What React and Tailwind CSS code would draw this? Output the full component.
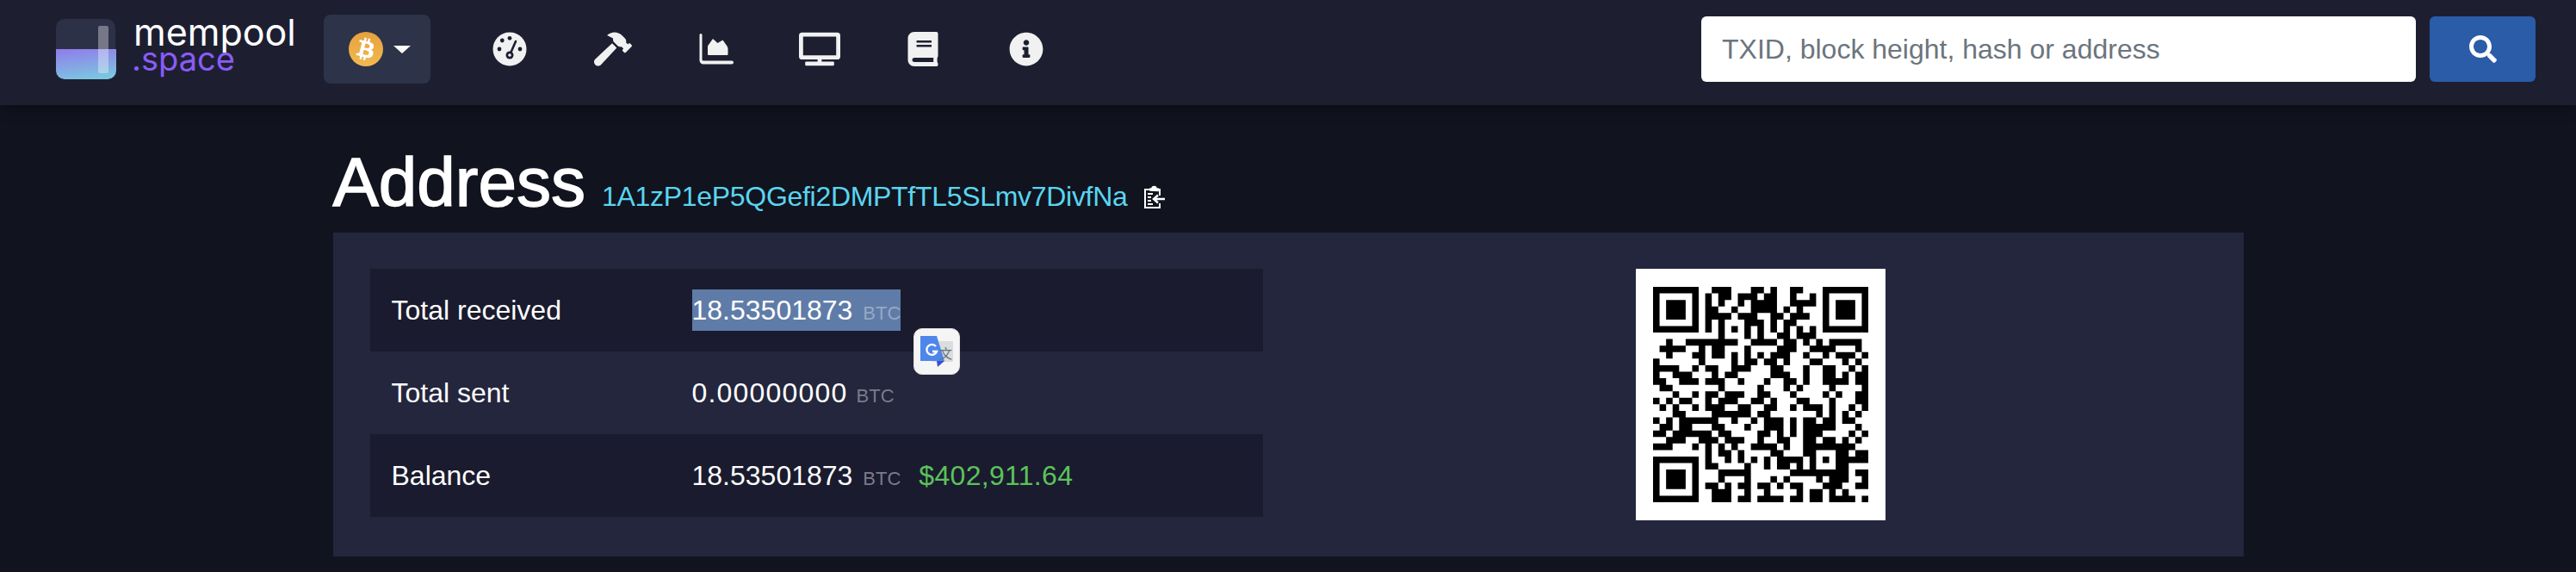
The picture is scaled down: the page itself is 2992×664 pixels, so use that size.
import React from 'react'
import { FaHammer, FaTv, FaBook, FaInfoCircle, FaSearch, FaBtc } from 'react-icons/fa'

const ADDRESS = '1A1zP1eP5QGefi2DMPTfTL5SLmv7DivfNa'

// qr version 4, level H, mask 1: 4 blocks of 9 data + 16 ec codewords
function buildQr(text) {
  const size = 33
  const exp = new Array(512)
  const log = new Array(256)
  let v = 1
  for (let i = 0; i < 255; i++) {
    exp[i] = v
    log[v] = i
    v <<= 1
    if (v & 256) v ^= 0x11d
  }
  for (let i = 255; i < 512; i++) exp[i] = exp[i - 255]
  const mul = (a, b) => (a && b ? exp[log[a] + log[b]] : 0)

  let gen = [1]
  for (let i = 0; i < 16; i++) {
    const next = new Array(gen.length + 1).fill(0)
    gen.forEach((c, j) => {
      next[j] ^= c
      next[j + 1] ^= mul(c, exp[i])
    })
    gen = next
  }

  let bits = '0100' + text.length.toString(2).padStart(8, '0')
  for (const ch of text) bits += ch.charCodeAt(0).toString(2).padStart(8, '0')
  bits += '0000'
  const data = []
  for (let i = 0; i < bits.length; i += 8) data.push(parseInt(bits.slice(i, i + 8), 2))

  const blocks = []
  const ecs = []
  for (let b = 0; b < 4; b++) {
    const block = data.slice(b * 9, b * 9 + 9)
    const rem = new Array(16).fill(0)
    block.forEach((d) => {
      const f = d ^ rem.shift()
      rem.push(0)
      for (let i = 0; i < 16; i++) rem[i] ^= mul(f, gen[i + 1])
    })
    blocks.push(block)
    ecs.push(rem)
  }
  const codewords = []
  for (let i = 0; i < 9; i++) blocks.forEach((b) => codewords.push(b[i]))
  for (let i = 0; i < 16; i++) ecs.forEach((e) => codewords.push(e[i]))

  const grid = Array.from({ length: size }, () => new Array(size).fill(false))
  const locked = Array.from({ length: size }, () => new Array(size).fill(false))
  const set = (x, y, on) => {
    if (x < 0 || y < 0 || x >= size || y >= size) return
    grid[y][x] = on
    locked[y][x] = true
  }

  for (let i = 0; i < size; i++) {
    set(6, i, i % 2 === 0)
    set(i, 6, i % 2 === 0)
  }
  const finder = (cx, cy) => {
    for (let dy = -4; dy <= 4; dy++) {
      for (let dx = -4; dx <= 4; dx++) {
        const d = Math.max(Math.abs(dx), Math.abs(dy))
        set(cx + dx, cy + dy, d !== 2 && d !== 4)
      }
    }
  }
  finder(3, 3)
  finder(size - 4, 3)
  finder(3, size - 4)
  for (let dy = -2; dy <= 2; dy++) {
    for (let dx = -2; dx <= 2; dx++) {
      set(26 + dx, 26 + dy, Math.max(Math.abs(dx), Math.abs(dy)) !== 1)
    }
  }

  const format = 0b001001110111110
  const fb = (i) => ((format >> i) & 1) === 1
  for (let i = 0; i < 6; i++) set(8, i, fb(i))
  set(8, 7, fb(6))
  set(8, 8, fb(7))
  set(7, 8, fb(8))
  for (let i = 9; i < 15; i++) set(14 - i, 8, fb(i))
  for (let i = 0; i < 8; i++) set(size - 1 - i, 8, fb(i))
  for (let i = 8; i < 15; i++) set(8, size - 15 + i, fb(i))
  set(8, size - 8, true)

  let n = 0
  for (let right = size - 1; right >= 1; right -= 2) {
    if (right === 6) right = 5
    for (let vert = 0; vert < size; vert++) {
      for (let j = 0; j < 2; j++) {
        const x = right - j
        const y = ((right + 1) & 2) === 0 ? size - 1 - vert : vert
        if (locked[y][x]) continue
        let on = false
        if (n < codewords.length * 8) {
          on = ((codewords[n >> 3] >> (7 - (n & 7))) & 1) === 1
          n++
        }
        grid[y][x] = y % 2 === 0 ? !on : on
      }
    }
  }
  return grid
}

function QrCode() {
  const grid = buildQr(ADDRESS)
  let d = ''
  grid.forEach((row, y) => row.forEach((on, x) => {
    if (on) d += `M${x} ${y}h1v1h-1z`
  }))
  return (
    <svg viewBox="0 0 33 33" className="w-[250px] h-[250px]">
      <path d={d} fill="#000" />
    </svg>
  )
}

function Logo() {
  return (
    <div className="flex items-center">
      <svg width="70" height="70" viewBox="0 0 70 70" className="block">
        <defs>
          <linearGradient id="pool" x1="0.3" y1="0" x2="0.55" y2="1">
            <stop offset="0" stopColor="#8f80ea" />
            <stop offset="1" stopColor="#7cc6e0" />
          </linearGradient>
        </defs>
        <path d="M10 0h49a10 10 0 0 1 10 10v25H0V10A10 10 0 0 1 10 0z" fill="#2d3148" />
        <path d="M0 35h70v25a10 10 0 0 1-10 10H10A10 10 0 0 1 0 60z" fill="url(#pool)" />
        <rect x="49" y="8" width="12" height="55" rx="2" fill="#fff" fillOpacity="0.35" />
      </svg>
      <div className="ml-[20px] w-[188px] -mt-[8px] whitespace-nowrap font-['Inter',sans-serif] leading-[31px]">
        <div className="text-white text-[43px]">mempool</div>
        <div className="text-[#8a5cf6] text-[38px] -ml-[2px]">.space</div>
      </div>
    </div>
  )
}

function GaugeIcon() {
  return (
    <svg width="40" height="40" viewBox="0 0 40 40">
      <circle cx="20" cy="20" r="19.500" fill="#f1f1f1" />
      <g fill="#1d1f31">
        <circle cx="8" cy="20" r="2.400" />
        <circle cx="11.300" cy="10" r="2.400" />
        <circle cx="20" cy="7.300" r="2.400" />
        <circle cx="32" cy="20" r="2.400" />
        <circle cx="20" cy="27" r="4.500" />
      </g>
      <path d="M20 27L27 11" stroke="#1d1f31" strokeWidth="2.600" strokeLinecap="round" />
      <circle cx="20" cy="27" r="1.800" fill="#f1f1f1" />
    </svg>
  )
}

function AreaIcon() {
  return (
    <svg width="40" height="36" viewBox="0 0 40 36" fill="#f1f1f1">
      <path d="M0.500 1.500a1.500 1.500 0 0 1 3 0V30a1.500 1.500 0 0 0 1.500 1.500h33a2 2 0 0 1 0 4H5A4.500 4.500 0 0 1 0.500 31z" />
      <path d="M10 24v-9q0-1 1-2l5-7 5.500 5 6-3.500 5 7q1 2 1 4v5.500q0 1-1 1H11q-1 0-1-1z" />
    </svg>
  )
}

function TranslateBadge() {
  return (
    <div className="absolute left-[257px] top-[45px] w-[54px] h-[54px] rounded-[10px] bg-[#f5f5f5] border border-[#dedede] flex items-center justify-center">
      <svg width="38" height="38" viewBox="0 0 38 38">
        <rect x="14" y="7" width="24" height="24" rx="1" fill="#dcdcdc" />
        <path d="M0 1h19l9 29H0z" fill="#4f86ec" />
        <path d="M19 30l9 0-8 7z" fill="#3b4fc9" />
        <path d="M18 13a6 6 0 1 0 1 6h-5" fill="none" stroke="#fff" strokeWidth="2.400" />
        <text x="22" y="27" fontSize="15" fill="#62757d" fontFamily="'Noto Sans CJK SC', sans-serif">文</text>
      </svg>
    </div>
  )
}

function Row({ label, dark, children }) {
  return (
    <div className={`grid grid-cols-[349px_1fr] items-center h-[96px] pl-[25px] ${dark ? 'bg-[#1a1b2e]' : ''}`}>
      <div>{label}</div>
      <div className="relative flex items-center">{children}</div>
    </div>
  )
}

function CopyIcon() {
  return (
    <svg width="25" height="28" viewBox="0 0 25 28" fill="none" stroke="#fff" strokeWidth="2" className="ml-[19px] self-center translate-y-[17px]">
      <path d="M8 5H2v21h17v-5M19 12V5h-6" />
      <path d="M8 6V4h2a2.500 2.500 0 0 1 5 0h2v2.500z" fill="#fff" strokeWidth="1.500" />
      <path d="M5 10h6M5 14h4M5 18h4M5 22h6" />
      <path d="M25 16H13M17 11.500L12 16l5 4.500" strokeWidth="2.500" />
    </svg>
  )
}

export default function App() {
  return (
    <div className="min-h-[664px] bg-[#11131f] text-white font-['Liberation_Sans',Arial,sans-serif] text-[32px] overflow-hidden">
      <nav className="relative h-[122px] bg-[#1d1f31] flex items-center pl-[65px] pr-[47px] pb-[8px] shadow-[0_4px_14px_rgba(0,0,0,0.35)]">
        <Logo />
        <button className="ml-[33px] w-[124px] h-[80px] rounded-[8px] bg-[#2d3348] flex items-center pl-[29px]">
          <span className="w-[40px] h-[40px] rounded-full bg-gradient-to-b from-[#e8a03d] to-[#f0ba50] flex items-center justify-center">
            <FaBtc className="text-white text-[26px] rotate-[14deg]" />
          </span>
          <span className="ml-[12px] w-0 h-0 border-x-[10px] border-x-transparent border-t-[9px] border-t-white" />
        </button>
        <div className="ml-[32px] flex items-center text-[#f1f1f1]">
          <div className="w-[120px] flex justify-center"><GaugeIcon /></div>
          <div className="w-[120px] flex justify-center"><FaHammer className="text-[44px]" /></div>
          <div className="w-[120px] flex justify-center"><AreaIcon /></div>
          <div className="w-[120px] flex justify-center"><FaTv className="text-[48px]" /></div>
          <div className="w-[120px] flex justify-center"><FaBook className="text-[40px]" /></div>
          <div className="w-[120px] flex justify-center"><FaInfoCircle className="text-[40px]" /></div>
        </div>
        <div className="ml-auto flex gap-[16px]">
          <input
            placeholder="TXID, block height, hash or address"
            className="w-[830px] h-[76px] rounded-[6px] bg-white px-[24px] text-[32px] text-[#495057] placeholder:text-[#6c757d] outline-none"
          />
          <button className="w-[123px] h-[76px] rounded-[6px] bg-[#2a5ca8] flex items-center justify-center">
            <FaSearch className="text-white text-[32px]" />
          </button>
        </div>
      </nav>

      <main className="w-[2219px] mx-auto">
        <div className="flex items-baseline pt-[42px] mb-[10px]">
          <h1 className="text-[80px] leading-[96px] font-normal [-webkit-text-stroke:1.5px_white]">Address</h1>
          <span className="ml-[19px] text-[#5ad5ef] tracking-[-0.3px]">{ADDRESS}</span>
          <CopyIcon />
        </div>
        <section className="bg-[#24263d] pl-[43px] pr-[42px] py-[42px] grid grid-cols-2 gap-x-[60px]">
          <div>
            <Row label="Total received" dark>
              <span className="bg-[#5f7ca8] h-[48px] flex items-baseline leading-[48px]">
                18.53501873<span className="ml-[12px] text-[22px] text-[#98a7c4]">BTC</span>
              </span>
              <TranslateBadge />
            </Row>
            <Row label="Total sent">
              <span className="flex items-baseline">
                <span className="tracking-[1.2px]">0.00000000</span><span className="ml-[10px] text-[22px] text-[#7a7b8a]">BTC</span>
              </span>
            </Row>
            <Row label="Balance" dark>
              <span className="flex items-baseline">
                18.53501873<span className="ml-[12px] text-[22px] text-[#7a7b8a]">BTC</span>
                <span className="ml-[21px] text-[#5cc25c] tracking-[0.3px]">$402,911.64</span>
              </span>
            </Row>
          </div>
          <div className="flex justify-center">
            <div className="w-[290px] h-[292px] bg-white flex items-center justify-center">
              <QrCode />
            </div>
          </div>
        </section>
      </main>
    </div>
  )
}
